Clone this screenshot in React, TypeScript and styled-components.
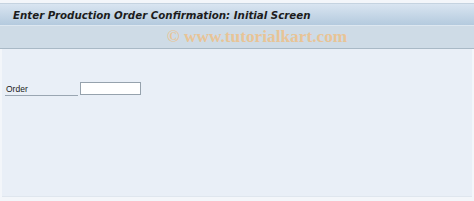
import styled, { createGlobalStyle } from "styled-components";

const GlobalStyle = createGlobalStyle`
  html, body {
    margin: 0;
    padding: 0;
    background: #ffffff;
  }
  #root {
    width: 474px;
    height: 201px;
  }
`;

const App = () => {
  return (
    <>
      <GlobalStyle />
      <Screen>
        <TitleBar>
          <Title>Enter Production Order Confirmation: Initial Screen</Title>
        </TitleBar>
        <Toolbar>
          <Watermark>© www.tutorialkart.com</Watermark>
        </Toolbar>
        <Content>
          <FieldRow>
            <FieldLabel>Order</FieldLabel>
            <FieldInput />
          </FieldRow>
        </Content>
      </Screen>
    </>
  );
};

const Screen = styled.div`
  display: flex;
  flex-direction: column;
  width: 474px;
  height: 201px;
  padding-top: 3px;
  box-sizing: border-box;
  background: #f3f6fa;
`;
const TitleBar = styled.div`
  display: flex;
  align-items: center;
  height: 21px;
  padding-left: 13px;
  background: linear-gradient(#d9e5f1, #b4cade);
  border-top: 1px solid #c5d3e0;
`;
const Title = styled.h1`
  margin: 0;
  font-family: "DejaVu Sans", sans-serif;
  font-size: 10.25px;
  font-weight: bold;
  font-style: italic;
  color: #1c1c1c;
`;
const Toolbar = styled.div`
  display: flex;
  align-items: center;
  justify-content: center;
  height: 22px;
  padding-left: 40px;
  background: #cedbe6;
  border-top: 1px solid #dde7f0;
  border-bottom: 1px solid #a9b9c6;
`;
const Watermark = styled.span`
  font-family: "Liberation Serif", serif;
  font-size: 17.3px;
  font-weight: bold;
  color: #e8c496;
`;
const Content = styled.div`
  flex: 1;
  display: flex;
  flex-direction: column;
  margin: 0 2px 4px 2px;
  padding: 33px 0 0 3px;
  background: #e9eff7;
  border-bottom: 1px solid #dfe6ee;
`;
const FieldRow = styled.div`
  display: flex;
  align-items: flex-end;
  gap: 2px;
`;
const FieldLabel = styled.label`
  width: 72px;
  padding: 0 0 1px 1px;
  font-family: "Liberation Sans", Arial, sans-serif;
  font-size: 8.5px;
  color: #1a1a1a;
  border-bottom: 1px solid #9aa6b2;
`;
const FieldInput = styled.div`
  width: 59px;
  height: 11px;
  margin-bottom: 1px;
  background: #ffffff;
  border: 1px solid #96a2ad;
`;

export default App;
